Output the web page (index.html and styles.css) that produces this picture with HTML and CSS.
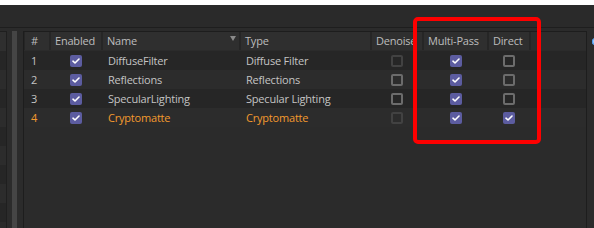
FILE: index.html
```html
<!DOCTYPE html>
<html>
<head>
<meta charset="utf-8">
<link rel="stylesheet" href="styles.css">
</head>
<body>
<div class="topwhite"></div>
<div class="toolbar"></div>
<div class="main">
  <div class="leftpanel">
    <div class="lp-head"></div>
    <div class="lp-row dark"></div>
    <div class="lp-row light"></div>
    <div class="lp-row dark"></div>
    <div class="lp-row light"></div>
    <div class="lp-row dark"></div>
    <div class="lp-row light"></div>
    <div class="lp-row dark"></div>
    <div class="lp-row light"></div>
    <div class="lp-row dark"></div>
  </div>
  <div class="scrollbar"></div>
  <div class="table">
    <div class="head">
      <div class="hc num">#</div>
      <div class="hc">Enabled</div>
      <div class="hc name">Name<span class="sort"></span></div>
      <div class="hc">Type</div>
      <div class="hc">Denoise</div>
      <div class="hc">Multi-Pass</div>
      <div class="hc">Direct</div>
      <div class="hc filler"></div>
    </div>
    <div class="row dark">
      <div class="c num">1</div>
      <div class="c ctr"><span class="cb on"></span></div>
      <div class="c txt">DiffuseFilter</div>
      <div class="c txt">Diffuse Filter</div>
      <div class="c ctr"><span class="cb dis"></span></div>
      <div class="c ctr"><span class="cb on"></span></div>
      <div class="c ctr"><span class="cb off"></span></div>
    </div>
    <div class="row light">
      <div class="c num">2</div>
      <div class="c ctr"><span class="cb on"></span></div>
      <div class="c txt">Reflections</div>
      <div class="c txt">Reflections</div>
      <div class="c ctr"><span class="cb off"></span></div>
      <div class="c ctr"><span class="cb on"></span></div>
      <div class="c ctr"><span class="cb off"></span></div>
    </div>
    <div class="row dark">
      <div class="c num">3</div>
      <div class="c ctr"><span class="cb on"></span></div>
      <div class="c txt">SpecularLighting</div>
      <div class="c txt">Specular Lighting</div>
      <div class="c ctr"><span class="cb off"></span></div>
      <div class="c ctr"><span class="cb on"></span></div>
      <div class="c ctr"><span class="cb off"></span></div>
    </div>
    <div class="row light sel">
      <div class="c num">4</div>
      <div class="c ctr"><span class="cb on"></span></div>
      <div class="c txt">Cryptomatte</div>
      <div class="c txt">Cryptomatte</div>
      <div class="c ctr"><span class="cb dis"></span></div>
      <div class="c ctr"><span class="cb on"></span></div>
      <div class="c ctr"><span class="cb on"></span></div>
    </div>
  </div>
  <div class="rightside"><span class="dot"></span></div>
</div>
<div class="highlight"></div>
</body>
</html>
```
FILE: styles.css
```css
html, body {
  margin: 0;
  padding: 0;
  width: 594px;
  height: 228px;
  overflow: hidden;
  background: #2b2b2b;
  font-family: "Open Sans", "Noto Sans", sans-serif;
  font-size: 11px;
  letter-spacing: -0.2px;
  color: #c4c4c4;
  position: relative;
}
.topwhite {
  height: 5px;
  background: #ffffff;
}
.toolbar {
  height: 22px;
  background: #2a2a2a;
  border-bottom: 1px solid #1e1e1e;
}
.main {
  display: flex;
  padding-top: 3px;
  height: 197px;
}
.main > * {
  flex: none;
}
.leftpanel {
  width: 6px;
  border-right: 1px solid #1f1f1f;
  border-top: 1px solid #1f1f1f;
  display: flex;
  flex-direction: column;
}
.lp-head {
  height: 19px;
  background: #2f2f2f;
}
.lp-row {
  height: 19px;
  flex: none;
}
.lp-row.dark { background: #262626; }
.lp-row.light { background: #2c2c2c; }
.scrollbar {
  width: 5px;
  margin-left: 5px;
  margin-right: 6px;
  background: #454545;
}
.table {
  width: 562px;
  border-left: 1px solid #1d1d1d;
  border-top: 1px solid #1d1d1d;
  border-right: 1px solid #1d1d1d;
  background: #2b2b2b;
}
.head, .row {
  display: grid;
  grid-template-columns: 24px 50px 136px 129px 50px 63px 40px 1fr;
  column-gap: 2px;
  padding-left: 1px;
}
.head {
  height: 18px;
  margin-bottom: 1px;
  background: #262626;
}
.hc {
  background: #2f2f2f;
  color: #bdbdbd;
  line-height: 18px;
  padding-left: 4px;
  white-space: nowrap;
  overflow: hidden;
  position: relative;
}
.hc.num { padding-left: 6px; }
.hc.filler { background: #2d2d2d; }
.sort {
  position: absolute;
  right: 3px;
  top: 4px;
  width: 0;
  height: 0;
  border-left: 3px solid transparent;
  border-right: 3px solid transparent;
  border-top: 5px solid #8a8a8a;
}
.row {
  height: 19px;
  align-items: center;
}
.row.dark { background: #262626; }
.row.light { background: #2c2c2c; }
.row.sel { color: #f39a2e; }
.c {
  white-space: nowrap;
  overflow: hidden;
}
.c.num { padding-left: 6px; }
.c.txt { padding-left: 5px; }
.c.ctr {
  display: flex;
  justify-content: center;
}
.cb {
  width: 12px;
  height: 12px;
  box-sizing: border-box;
  border-radius: 2px;
  display: block;
}
.cb.on {
  background: #5c5ca0 url("data:image/svg+xml;utf8,<svg xmlns='http://www.w3.org/2000/svg' width='12' height='12' viewBox='0 0 12 12'><path d='M3 6.2 L5 8 L9 4' fill='none' stroke='white' stroke-width='1.6' stroke-linecap='round' stroke-linejoin='round'/></svg>") no-repeat center;
}
.cb.off {
  border: 2px solid #6c6c6c;
}
.cb.dis {
  border: 2px solid #424242;
}
.rightside {
  padding-left: 5px;
  padding-top: 7px;
}
.dot {
  display: block;
  width: 8px;
  height: 7px;
  border-radius: 4px;
  background: #9ccbff;
  box-shadow: inset 0 0 0 1px #4b9cf2;
}
.highlight {
  position: absolute;
  left: 413px;
  top: 17px;
  width: 128px;
  height: 127px;
  box-sizing: border-box;
  border: 4px solid #fe0000;
  border-radius: 5px;
}
```
